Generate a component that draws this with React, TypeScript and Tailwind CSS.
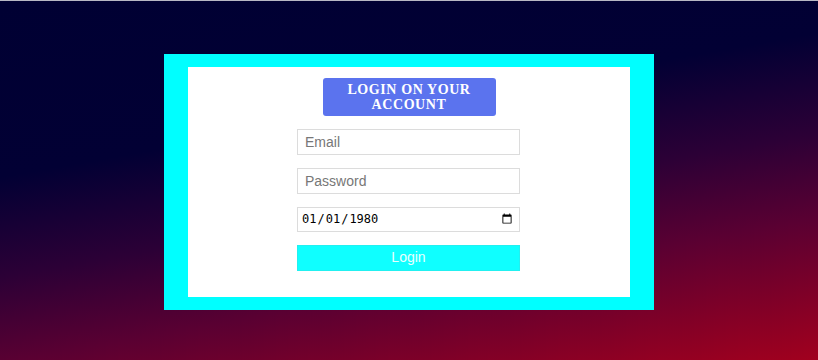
import React from "react";

export default function App() {
  return (
    <div
      className="min-h-[360px] w-full flex items-center justify-center pt-[3px] border-t border-[#b8b8c4] bg-[linear-gradient(170deg,#000033_0%,#020034_35%,#2c0036_55%,#5a0032_72%,#a1001e_100%)]"
      style={{ fontFamily: '"Liberation Sans", Arial, sans-serif' }}
    >
      <div className="w-[490px] h-[256px] bg-[#00ffff] px-[24px] py-[13px]">
        <div className="w-full h-full bg-white flex flex-col items-center pt-[11px]">
          <div
            className="w-[173px] h-[38px] rounded-[3px] bg-[#5b73ee] flex flex-col items-center justify-center text-white font-bold uppercase text-[14px] leading-[15px] tracking-[0.6px] text-center"
            style={{ fontFamily: '"Liberation Serif", "Times New Roman", serif' }}
          >
            <span>Login on your</span>
            <span>Account</span>
          </div>
          <div className="w-[223px] mr-[1px] mt-[13px] flex flex-col gap-[13px]">
            <input
              type="email"
              placeholder="Email"
              className="h-[26px] w-full border border-[#dcdcdc] px-[7px] text-[14px] text-[#333] placeholder:text-[#777] outline-none"
            />
            <input
              type="password"
              placeholder="Password"
              className="h-[25.5px] w-full border border-[#dcdcdc] px-[7px] text-[14px] text-[#333] placeholder:text-[#777] outline-none"
            />
            <input
              type="date"
              defaultValue="1980-01-01"
              className="h-[25.5px] w-full border border-[#dcdcdc] pl-[3px] pr-[4px] text-[12px] text-black outline-none"
              style={{ fontFamily: '"DejaVu Sans Mono", monospace' }}
            />
            <button className="h-[25.5px] w-full bg-[#0fffff] text-[#e8ffff] text-[14px] border border-[#22f0f0]">
              Login
            </button>
          </div>
        </div>
      </div>
    </div>
  );
}
